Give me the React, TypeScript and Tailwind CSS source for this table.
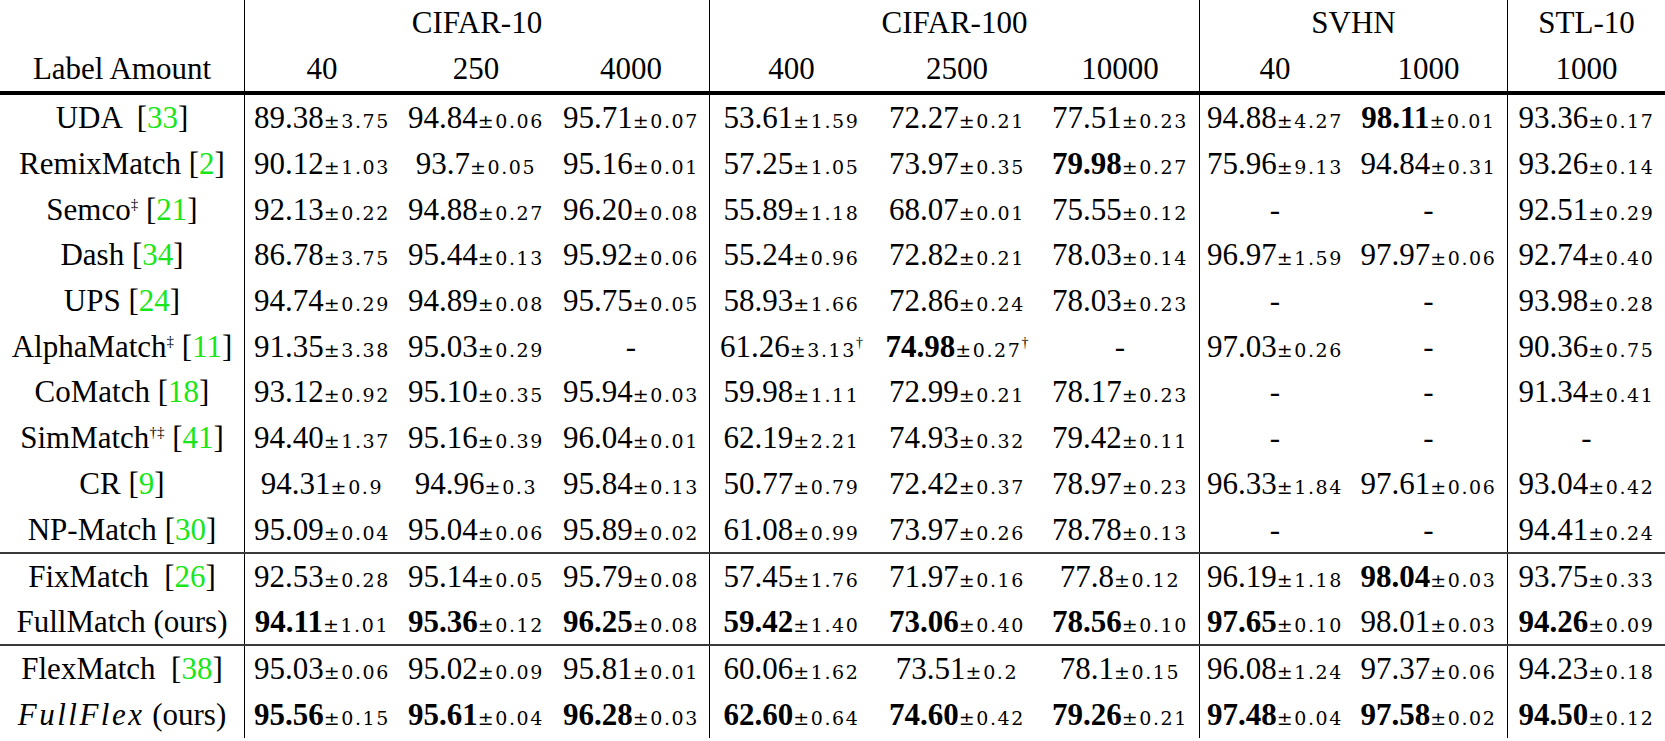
import React from "react";

const COLS = [
  "w-[244px]",
  "w-[155px] border-l border-black",
  "w-[154px]",
  "w-[156px]",
  "w-[164px] border-l border-black",
  "w-[168px]",
  "w-[158px]",
  "w-[151px] border-l border-black",
  "w-[157px]",
  "w-[158px] border-l border-black",
];

type Label = { name: string; sup?: string; cite?: string; italic?: boolean; ours?: boolean };

const ROWS_A: [Label, string[]][] = [
  [{ name: "UDA  ", cite: "33" }, ["89.38±3.75", "94.84±0.06", "95.71±0.07", "53.61±1.59", "72.27±0.21", "77.51±0.23", "94.88±4.27", "*98.11±0.01", "93.36±0.17"]],
  [{ name: "RemixMatch ", cite: "2" }, ["90.12±1.03", "93.7±0.05", "95.16±0.01", "57.25±1.05", "73.97±0.35", "*79.98±0.27", "75.96±9.13", "94.84±0.31", "93.26±0.14"]],
  [{ name: "Semco", sup: "‡", cite: "21" }, ["92.13±0.22", "94.88±0.27", "96.20±0.08", "55.89±1.18", "68.07±0.01", "75.55±0.12", "-", "-", "92.51±0.29"]],
  [{ name: "Dash ", cite: "34" }, ["86.78±3.75", "95.44±0.13", "95.92±0.06", "55.24±0.96", "72.82±0.21", "78.03±0.14", "96.97±1.59", "97.97±0.06", "92.74±0.40"]],
  [{ name: "UPS ", cite: "24" }, ["94.74±0.29", "94.89±0.08", "95.75±0.05", "58.93±1.66", "72.86±0.24", "78.03±0.23", "-", "-", "93.98±0.28"]],
  [{ name: "AlphaMatch", sup: "‡", cite: "11" }, ["91.35±3.38", "95.03±0.29", "-", "61.26±3.13†", "*74.98±0.27†", "-", "97.03±0.26", "-", "90.36±0.75"]],
  [{ name: "CoMatch ", cite: "18" }, ["93.12±0.92", "95.10±0.35", "95.94±0.03", "59.98±1.11", "72.99±0.21", "78.17±0.23", "-", "-", "91.34±0.41"]],
  [{ name: "SimMatch", sup: "†‡", cite: "41" }, ["94.40±1.37", "95.16±0.39", "96.04±0.01", "62.19±2.21", "74.93±0.32", "79.42±0.11", "-", "-", "-"]],
  [{ name: "CR ", cite: "9" }, ["94.31±0.9", "94.96±0.3", "95.84±0.13", "50.77±0.79", "72.42±0.37", "78.97±0.23", "96.33±1.84", "97.61±0.06", "93.04±0.42"]],
  [{ name: "NP-Match ", cite: "30" }, ["95.09±0.04", "95.04±0.06", "95.89±0.02", "61.08±0.99", "73.97±0.26", "78.78±0.13", "-", "-", "94.41±0.24"]],
];

const ROWS_B: [Label, string[]][] = [
  [{ name: "FixMatch  ", cite: "26" }, ["92.53±0.28", "95.14±0.05", "95.79±0.08", "57.45±1.76", "71.97±0.16", "77.8±0.12", "96.19±1.18", "*98.04±0.03", "93.75±0.33"]],
  [{ name: "FullMatch", ours: true }, ["*94.11±1.01", "*95.36±0.12", "*96.25±0.08", "*59.42±1.40", "*73.06±0.40", "*78.56±0.10", "*97.65±0.10", "98.01±0.03", "*94.26±0.09"]],
];

const ROWS_C: [Label, string[]][] = [
  [{ name: "FlexMatch  ", cite: "38" }, ["95.03±0.06", "95.02±0.09", "95.81±0.01", "60.06±1.62", "73.51±0.2", "78.1±0.15", "96.08±1.24", "97.37±0.06", "94.23±0.18"]],
  [{ name: "FullFlex", italic: true, ours: true }, ["*95.56±0.15", "*95.61±0.04", "*96.28±0.03", "*62.60±0.64", "*74.60±0.42", "*79.26±0.21", "*97.48±0.04", "*97.58±0.02", "*94.50±0.12"]],
];

function LabelCell({ l }: { l: Label }) {
  return (
    <span className="whitespace-pre">
      {l.italic ? <span className="italic tracking-[2.5px]">{l.name}</span> : l.name}
      {l.sup && (
        <>
          <span className="relative -top-[11px] text-[15px]">{l.sup}</span>{" "}
        </>
      )}
      {l.cite && (
        <>
          [<span className="text-[#19e619]">{l.cite}</span>]
        </>
      )}
      {l.ours && " (ours)"}
    </span>
  );
}

function ValueCell({ v }: { v: string }) {
  if (v === "-") return <span>-</span>;
  let s = v;
  const bold = s.startsWith("*");
  if (bold) s = s.slice(1);
  const dag = s.endsWith("†");
  if (dag) s = s.slice(0, -1);
  const [m, e] = s.split("±");
  return (
    <span className="whitespace-nowrap">
      <span className={bold ? "font-bold" : ""}>{m}</span>
      <span className="font-['DejaVu_Serif',serif] text-[19px] tracking-[1.6px]">±{e}</span>
      {dag && <span className="relative -top-[10px] text-[14px]">†</span>}
    </span>
  );
}

function BodyRow({ label, vals, h }: { label: Label; vals: string[]; h: string }) {
  return (
    <div className={`flex ${h}`}>
      <div className={`${COLS[0]} flex items-center justify-center`}>
        <LabelCell l={label} />
      </div>
      {vals.map((v, i) => (
        <div key={i} className={`${COLS[i + 1]} flex items-center justify-center`}>
          <ValueCell v={v} />
        </div>
      ))}
    </div>
  );
}

export default function App() {
  return (
    <div className="w-[1665px] h-[741px] bg-white text-black font-['Liberation_Serif',serif] text-[31px] leading-none overflow-hidden">
      {/* header row 1 */}
      <div className="flex h-[45.5px]">
        <div className="w-[244px]" />
        <div className="w-[465px] border-l border-black flex items-center justify-center">CIFAR-10</div>
        <div className="w-[490px] border-l border-black flex items-center justify-center">CIFAR-100</div>
        <div className="w-[308px] border-l border-black flex items-center justify-center">SVHN</div>
        <div className="w-[158px] border-l border-black flex items-center justify-center">STL-10</div>
      </div>
      {/* header row 2 */}
      <div className="flex h-[45.5px]">
        <div className={`${COLS[0]} flex items-center justify-center`}>Label Amount</div>
        {["40", "250", "4000", "400", "2500", "10000", "40", "1000", "1000"].map((t, i) => (
          <div key={i} className={`${COLS[i + 1]} flex items-center justify-center`}>
            {t}
          </div>
        ))}
      </div>
      <div className="h-[4px] bg-black" />
      {ROWS_A.map(([l, v], i) => (
        <BodyRow key={i} label={l} vals={v} h="h-[45.7px]" />
      ))}
      <div className="h-[2px] bg-[#3a3a3a]" />
      {ROWS_B.map(([l, v], i) => (
        <BodyRow key={i} label={l} vals={v} h="h-[45px]" />
      ))}
      <div className="h-[2px] bg-[#3a3a3a]" />
      {ROWS_C.map(([l, v], i) => (
        <BodyRow key={i} label={l} vals={v} h="h-[46px]" />
      ))}
    </div>
  );
}
